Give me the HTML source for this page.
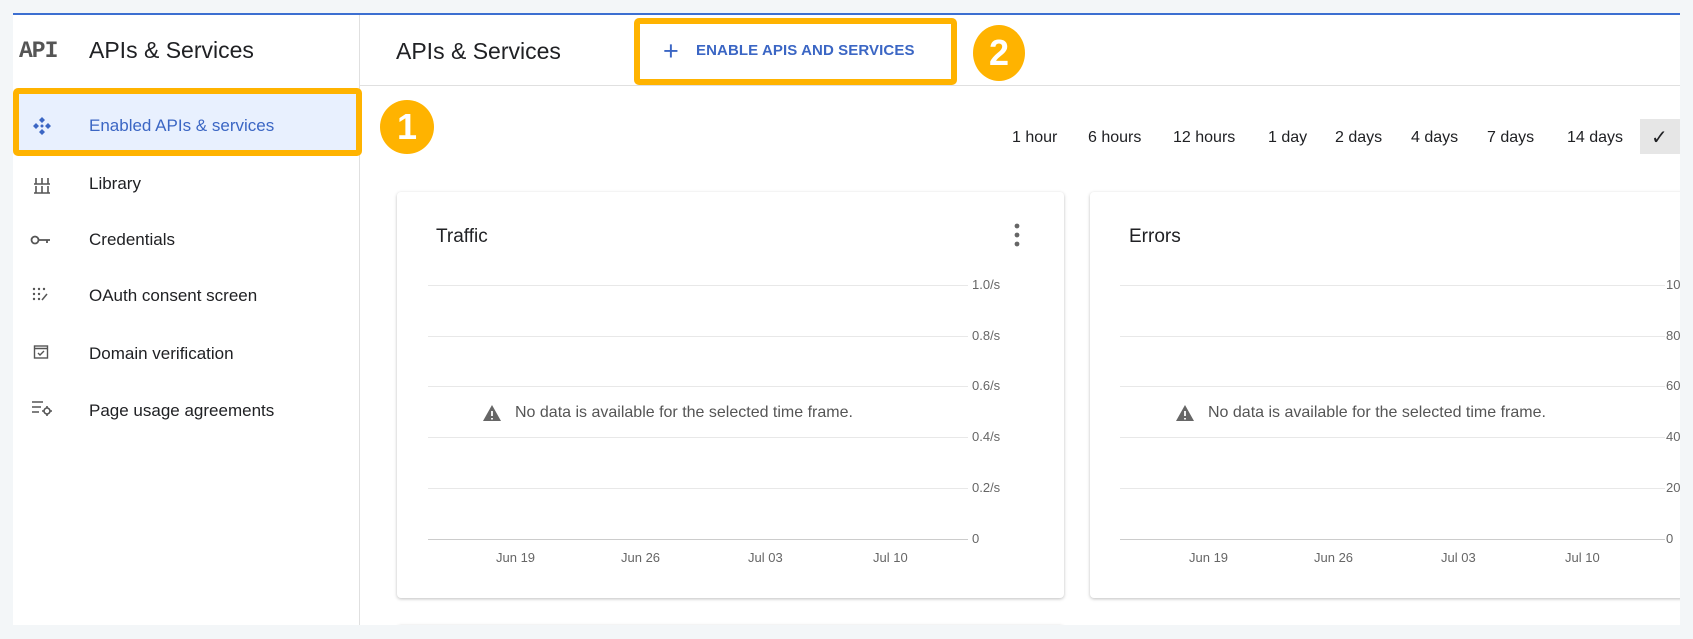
<!DOCTYPE html>
<html><head><meta charset="utf-8"><style>
*{box-sizing:border-box;margin:0;padding:0}
body{width:1693px;height:639px;background:#f3f6f8;font-family:"Liberation Sans",Arial,sans-serif;position:relative;overflow:hidden;color:#202124}
.a{position:absolute}
#page{left:13px;top:13px;width:1667px;height:612px;background:#fff;border-top:2px solid #3c6fd1;overflow:hidden}
.t{position:absolute;white-space:nowrap}
.nav{font-size:17px;color:#202124}
.grid{position:absolute;height:1px;background:#e8e8e8}
.yl{position:absolute;font-size:13px;color:#666}
.xl{position:absolute;font-size:13px;color:#666}
.card{position:absolute;background:#fff;border-radius:4px;box-shadow:0 1px 3px rgba(0,0,0,.25)}
.circ{position:absolute;width:54px;height:54px;border-radius:50%;background:#ffb300;color:#fff;font-weight:bold;font-size:36px;text-align:center;line-height:54px}
.tr{position:absolute;top:114px;font-size:16px;color:#202124}
</style></head><body>
<div class="a" id="page">
 <div class="a" style="left:346px;top:0;width:1px;height:612px;background:#e0e0e0"></div>
 <div class="a" style="left:347px;top:70px;width:1320px;height:1px;background:#e0e0e0"></div>
 <div class="t" style="left:6px;top:23px;font-family:'Liberation Mono',monospace;font-weight:bold;font-size:23px;color:#555;letter-spacing:-1px">API</div>
 <div class="t" style="left:76px;top:22px;font-size:23px">APIs &amp; Services</div>
 <div class="a" style="left:0;top:73px;width:349px;height:68px;border:6px solid #ffb300;border-radius:5px;background:#e8f0fe"></div>
 <svg class="a" style="left:19px;top:101px" width="20" height="20" viewBox="0 0 20 20" fill="#3b66c4"><path d="M10 1l3 3-3 3-3-3zM10 13l3 3-3 3-3-3zM1 10l3-3 3 3-3 3zM13 10l3-3 3 3-3 3z"/><circle cx="10" cy="10" r="1.5"/></svg>
 <div class="t nav" style="left:76px;top:101px;color:#3b66c4">Enabled APIs &amp; services</div>
 <svg class="a" style="left:19px;top:160px" width="20" height="20" viewBox="0 0 20 20" stroke="#555" stroke-width="1.6" fill="none"><path d="M2 9h16M2 18h16M4 3v6M10 3v6M16 3v6M4 11v7M10 11v7M16 11v7"/></svg>
 <div class="t nav" style="left:76px;top:159px">Library</div>
 <svg class="a" style="left:17px;top:218px" width="22" height="14" viewBox="0 0 22 14" stroke="#555" stroke-width="1.8" fill="none"><circle cx="5" cy="7" r="3.5"/><path d="M9 7h11M17 7v3"/></svg>
 <div class="t nav" style="left:76px;top:215px">Credentials</div>
 <svg class="a" style="left:19px;top:272px" width="18" height="16" viewBox="0 0 18 16" fill="#555"><circle cx="2" cy="2" r="1.2"/><circle cx="7" cy="2" r="1.2"/><circle cx="12" cy="2" r="1.2"/><circle cx="2" cy="7" r="1.2"/><circle cx="7" cy="7" r="1.2"/><circle cx="2" cy="12" r="1.2"/><circle cx="7" cy="12" r="1.2"/><path d="M10 13l5-6" stroke="#555" stroke-width="1.5"/></svg>
 <div class="t nav" style="left:76px;top:271px">OAuth consent screen</div>
 <svg class="a" style="left:20px;top:329px" width="16" height="16" viewBox="0 0 16 16" stroke="#555" stroke-width="1.4" fill="none"><rect x="1.5" y="2" width="13" height="12"/><path d="M1.5 4.5h13M5 9l2 2 4-4"/></svg>
 <div class="t nav" style="left:76px;top:329px">Domain verification</div>
 <svg class="a" style="left:18px;top:385px" width="22" height="16" viewBox="0 0 22 16" stroke="#555" stroke-width="1.6" fill="none"><path d="M1 2h11M1 7h9M1 12h7"/><circle cx="16" cy="11" r="3"/><path d="M16 6v2M16 14v2M11 11h2M19 11h2"/></svg>
 <div class="t nav" style="left:76px;top:386px">Page usage agreements</div>
 <div class="circ" style="left:367px;top:85px">1</div>
 <div class="t" style="left:383px;top:23px;font-size:23px">APIs &amp; Services</div>
 <div class="a" style="left:621px;top:3px;width:323px;height:67px;border:6px solid #ffb300;border-radius:5px;background:#fff"></div>
 <div class="t" style="left:650px;top:21px;font-size:27px;color:#3b66c4;font-weight:300">+</div>
 <div class="t" style="left:683px;top:27px;font-size:15px;color:#3b66c4;font-weight:bold;letter-spacing:0.1px">ENABLE APIS AND SERVICES</div>
 <div class="circ" style="left:960px;top:10px;width:52px;height:56px;line-height:56px">2</div>
 <div class="tr" style="left:999px">1 hour</div>
 <div class="tr" style="left:1075px">6 hours</div>
 <div class="tr" style="left:1160px">12 hours</div>
 <div class="tr" style="left:1255px">1 day</div>
 <div class="tr" style="left:1322px">2 days</div>
 <div class="tr" style="left:1398px">4 days</div>
 <div class="tr" style="left:1474px">7 days</div>
 <div class="tr" style="left:1554px">14 days</div>
 <div class="a" style="left:1627px;top:104px;width:40px;height:35px;background:#e6e6e6"></div>
 <div class="t" style="left:1638px;top:110px;font-size:20px">✓</div>
 <div class="card" style="left:384px;top:177px;width:667px;height:406px"></div>
 <div class="t" style="left:423px;top:211px;font-size:19px">Traffic</div>
 <svg class="a" style="left:1001px;top:208px" width="6" height="24"><circle cx="3" cy="3" r="2.4" fill="#666"/><circle cx="3" cy="12" r="2.4" fill="#666"/><circle cx="3" cy="21" r="2.4" fill="#666"/></svg>
 <div class="grid" style="left:415px;top:270px;width:540px"></div><div class="yl" style="left:959px;top:262px">1.0/s</div>
 <div class="grid" style="left:415px;top:321px;width:540px"></div><div class="yl" style="left:959px;top:313px">0.8/s</div>
 <div class="grid" style="left:415px;top:371px;width:540px"></div><div class="yl" style="left:959px;top:363px">0.6/s</div>
 <div class="grid" style="left:415px;top:422px;width:540px"></div><div class="yl" style="left:959px;top:414px">0.4/s</div>
 <div class="grid" style="left:415px;top:473px;width:540px"></div><div class="yl" style="left:959px;top:465px">0.2/s</div>
 <div class="grid" style="left:415px;top:524px;width:540px;background:#ccc"></div><div class="yl" style="left:959px;top:516px">0</div>
 <div class="xl" style="left:483px;top:535px">Jun 19</div><div class="xl" style="left:608px;top:535px">Jun 26</div><div class="xl" style="left:735px;top:535px">Jul 03</div><div class="xl" style="left:860px;top:535px">Jul 10</div>
 <svg class="a" style="left:469px;top:389px" width="20" height="18" viewBox="0 0 20 18"><path d="M10 1L19 17H1z" fill="#666"/><path d="M10 7v5M10 14v1.5" stroke="#fff" stroke-width="1.8"/></svg>
 <div class="t" style="left:502px;top:389px;font-size:16px;color:#555">No data is available for the selected time frame.</div>
 <div class="card" style="left:1077px;top:177px;width:620px;height:406px"></div>
 <div class="t" style="left:1116px;top:211px;font-size:19px">Errors</div>
 <div class="grid" style="left:1107px;top:270px;width:545px"></div><div class="yl" style="left:1653px;top:262px">10</div>
 <div class="grid" style="left:1107px;top:321px;width:545px"></div><div class="yl" style="left:1653px;top:313px">80</div>
 <div class="grid" style="left:1107px;top:371px;width:545px"></div><div class="yl" style="left:1653px;top:363px">60</div>
 <div class="grid" style="left:1107px;top:422px;width:545px"></div><div class="yl" style="left:1653px;top:414px">40</div>
 <div class="grid" style="left:1107px;top:473px;width:545px"></div><div class="yl" style="left:1653px;top:465px">20</div>
 <div class="grid" style="left:1107px;top:524px;width:545px;background:#ccc"></div><div class="yl" style="left:1653px;top:516px">0</div>
 <div class="xl" style="left:1176px;top:535px">Jun 19</div><div class="xl" style="left:1301px;top:535px">Jun 26</div><div class="xl" style="left:1428px;top:535px">Jul 03</div><div class="xl" style="left:1552px;top:535px">Jul 10</div>
 <svg class="a" style="left:1162px;top:389px" width="20" height="18" viewBox="0 0 20 18"><path d="M10 1L19 17H1z" fill="#666"/><path d="M10 7v5M10 14v1.5" stroke="#fff" stroke-width="1.8"/></svg>
 <div class="t" style="left:1195px;top:389px;font-size:16px;color:#555">No data is available for the selected time frame.</div>
 <div class="card" style="left:384px;top:610px;width:667px;height:40px"></div>
</div>
</body></html>
